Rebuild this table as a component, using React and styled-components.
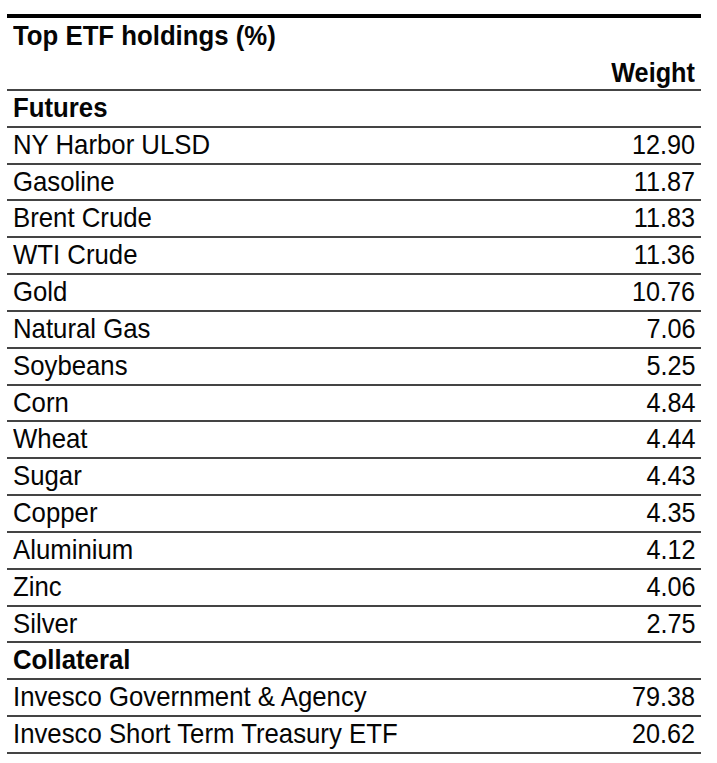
import React from "react"
import styled, { createGlobalStyle } from "styled-components"

const GlobalStyle = createGlobalStyle`
  html, body {
    margin: 0;
    padding: 0;
    background: #fff;
  }
  body {
    font-family: "Liberation Sans", Arial, sans-serif;
    color: #050505;
  }
`

const holdings = [
  { section: "Futures" },
  { name: "NY Harbor ULSD", weight: "12.90" },
  { name: "Gasoline", weight: "11.87" },
  { name: "Brent Crude", weight: "11.83" },
  { name: "WTI Crude", weight: "11.36" },
  { name: "Gold", weight: "10.76" },
  { name: "Natural Gas", weight: "7.06" },
  { name: "Soybeans", weight: "5.25" },
  { name: "Corn", weight: "4.84" },
  { name: "Wheat", weight: "4.44" },
  { name: "Sugar", weight: "4.43" },
  { name: "Copper", weight: "4.35" },
  { name: "Aluminium", weight: "4.12" },
  { name: "Zinc", weight: "4.06" },
  { name: "Silver", weight: "2.75" },
  { section: "Collateral" },
  { name: "Invesco Government & Agency", weight: "79.38" },
  { name: "Invesco Short Term Treasury ETF", weight: "20.62" },
]

const Table = styled.div`
  margin: 14px 0 0 7px;
  width: 694px;
  border-top: 4px solid #000;
`

const Header = styled.div`
  display: flex;
  flex-direction: column;
  border-bottom: 2px solid #444;
`

const TitleRow = styled.div`
  height: 36px;
  line-height: 36px;
  padding: 0 6px;
`

const WeightRow = styled.div`
  height: 35px;
  box-sizing: border-box;
  padding: 2px 6px 0;
  line-height: 33px;
  display: flex;
  justify-content: flex-end;
`

const Row = styled.div`
  display: flex;
  justify-content: space-between;
  align-items: center;
  height: 36.83px;
  box-sizing: border-box;
  border-bottom: 2px solid #444;
  padding: 0 6px;
  line-height: 34.83px;
`

const Text = styled.span`
  display: inline-block;
  font-size: 28px;
  font-weight: ${p => (p.bold ? 700 : 400)};
  white-space: nowrap;
  transform: scaleX(${p => (p.right ? 0.9 : 0.92)});
  transform-origin: ${p => (p.right ? "right" : "left")} center;
`

export default function App() {
  return (
    <>
      <GlobalStyle />
      <Table>
        <Header>
          <TitleRow>
            <Text bold>Top ETF holdings (%)</Text>
          </TitleRow>
          <WeightRow>
            <Text bold right>
              Weight
            </Text>
          </WeightRow>
        </Header>
        {holdings.map((h, i) =>
          h.section ? (
            <Row key={i}>
              <Text bold>{h.section}</Text>
            </Row>
          ) : (
            <Row key={i}>
              <Text>{h.name}</Text>
              <Text right>{h.weight}</Text>
            </Row>
          )
        )}
      </Table>
    </>
  )
}
